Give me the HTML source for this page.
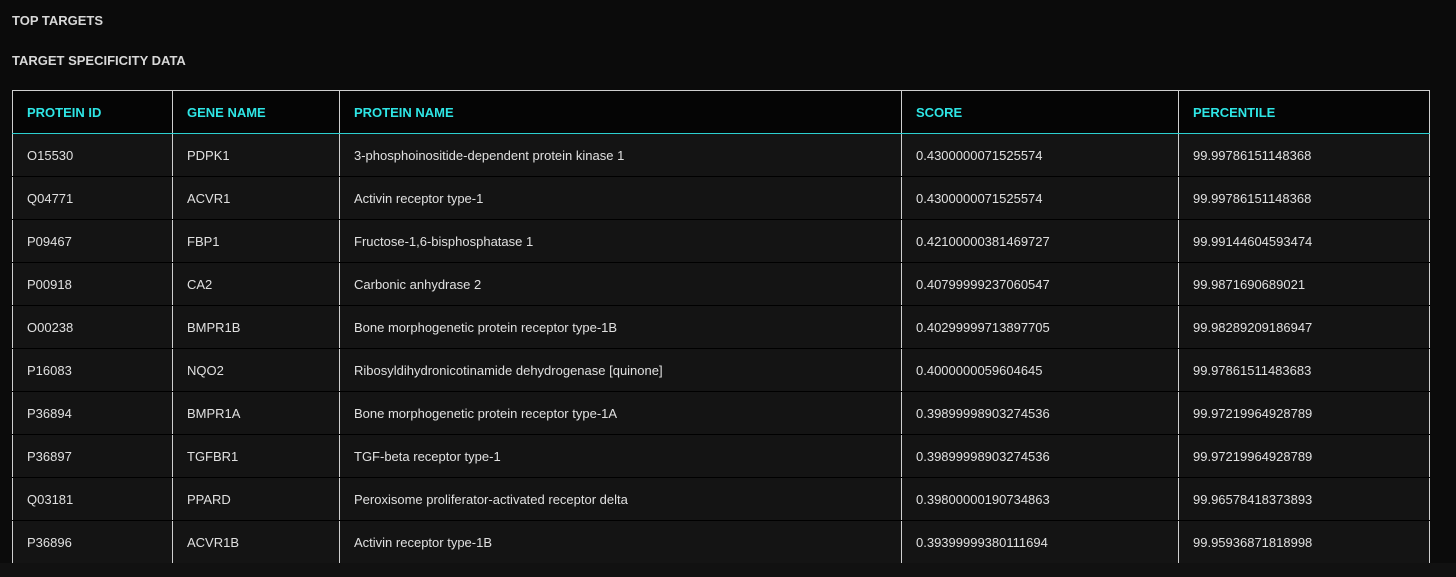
<!DOCTYPE html>
<html><head><style>
body{margin:0;background:#0b0b0b;width:1456px;height:577px;overflow:hidden;font-family:"Liberation Sans",Arial,sans-serif;}
.h{position:absolute;left:12px;color:#d8d8d8;font-weight:bold;font-size:13px;}
.bot{position:absolute;left:0;top:563px;width:1456px;height:14px;background:#111;}
table{position:absolute;left:12px;top:90px;border-collapse:collapse;width:1418px;table-layout:fixed;}
th,td{text-align:left;padding:0 0 0 14px;border-left:1px solid #cfcfcf;border-right:1px solid #cfcfcf;font-size:13px;}
th{height:42px;background:#050505;color:#2ee6e6;font-weight:bold;border-top:1px solid #cfcfcf;border-bottom:1px solid #2ccfd0;}
td{height:42px;background:#141414;color:#e0e0e0;border-bottom:1px solid #000;}
tr:last-child td{border-bottom:none}
</style></head><body>
<div class="h" style="top:13px">TOP TARGETS</div>
<div class="h" style="top:53px">TARGET SPECIFICITY DATA</div>
<div class="bot"></div>
<table>
<colgroup><col style="width:160px"><col style="width:167px"><col style="width:562px"><col style="width:277px"><col></colgroup>
<tr><th>PROTEIN ID</th><th>GENE NAME</th><th>PROTEIN NAME</th><th>SCORE</th><th>PERCENTILE</th></tr>
<tr><td>O15530</td><td>PDPK1</td><td>3-phosphoinositide-dependent protein kinase 1</td><td>0.4300000071525574</td><td>99.99786151148368</td></tr>
<tr><td>Q04771</td><td>ACVR1</td><td>Activin receptor type-1</td><td>0.4300000071525574</td><td>99.99786151148368</td></tr>
<tr><td>P09467</td><td>FBP1</td><td>Fructose-1,6-bisphosphatase 1</td><td>0.42100000381469727</td><td>99.99144604593474</td></tr>
<tr><td>P00918</td><td>CA2</td><td>Carbonic anhydrase 2</td><td>0.40799999237060547</td><td>99.9871690689021</td></tr>
<tr><td>O00238</td><td>BMPR1B</td><td>Bone morphogenetic protein receptor type-1B</td><td>0.40299999713897705</td><td>99.98289209186947</td></tr>
<tr><td>P16083</td><td>NQO2</td><td>Ribosyldihydronicotinamide dehydrogenase [quinone]</td><td>0.4000000059604645</td><td>99.97861511483683</td></tr>
<tr><td>P36894</td><td>BMPR1A</td><td>Bone morphogenetic protein receptor type-1A</td><td>0.39899998903274536</td><td>99.97219964928789</td></tr>
<tr><td>P36897</td><td>TGFBR1</td><td>TGF-beta receptor type-1</td><td>0.39899998903274536</td><td>99.97219964928789</td></tr>
<tr><td>Q03181</td><td>PPARD</td><td>Peroxisome proliferator-activated receptor delta</td><td>0.39800000190734863</td><td>99.96578418373893</td></tr>
<tr><td>P36896</td><td>ACVR1B</td><td>Activin receptor type-1B</td><td>0.39399999380111694</td><td>99.95936871818998</td></tr>
</table>
</body></html>
